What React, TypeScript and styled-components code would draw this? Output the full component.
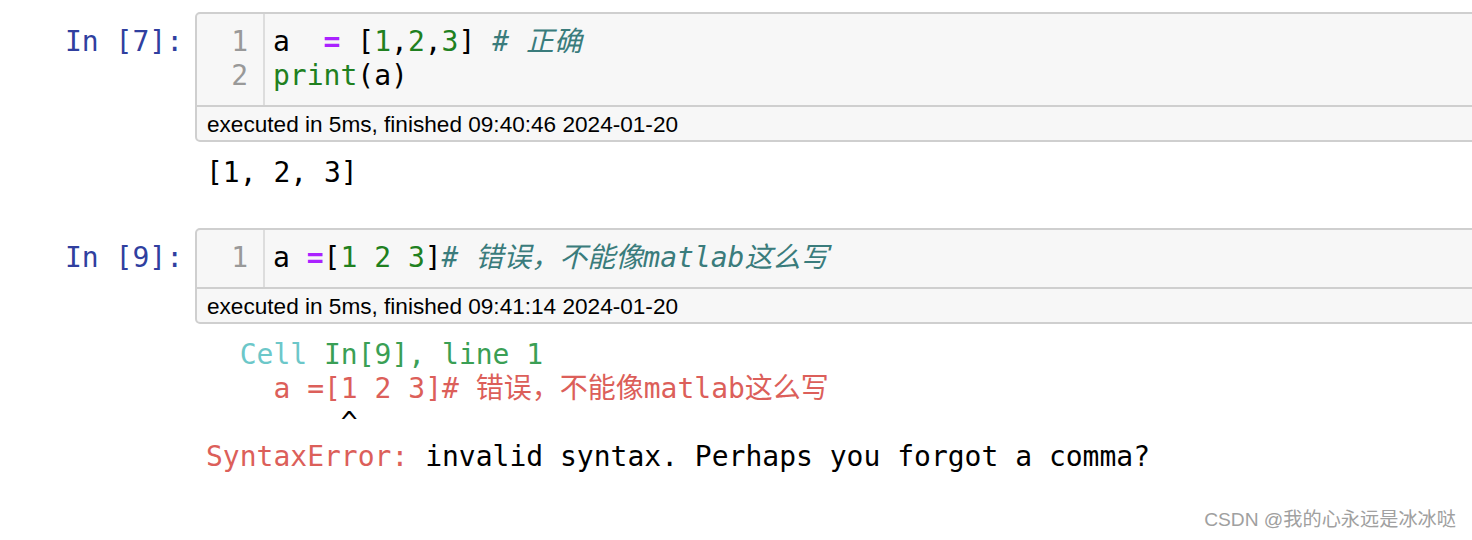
import React from "react";
import styled, { createGlobalStyle } from "styled-components";

const Global = createGlobalStyle`
  html, body { margin: 0; padding: 0; background: #fff; overflow: hidden; }
  body { width: 1472px; height: 540px; position: relative; }
`;

const MONO = `"DejaVu Sans Mono", "Noto Sans CJK SC", monospace`;

const Notebook = styled.div`
  width: 1510px;
  padding-top: 12px;
  display: flex;
  flex-direction: column;
  gap: 38px;
`;

const CellBlock = styled.div`
  display: flex;
  flex-direction: column;
`;

const InputRow = styled.div`
  display: flex;
  align-items: flex-start;
`;

const Prompt = styled.div`
  width: 195px;
  flex: none;
  box-sizing: border-box;
  padding-right: 12px;
  padding-top: 13px;
  text-align: right;
  font-family: ${MONO};
  font-size: 28px;
  line-height: 34px;
  color: #303f9f;
  white-space: pre;
`;

const InputBox = styled.div`
  flex: 1;
  border: 2px solid #cfcfcf;
  border-radius: 5px;
  background: #f7f7f7;
  display: flex;
  flex-direction: column;
`;

const CodeArea = styled.div`
  display: flex;
`;

const Gutter = styled.div`
  width: 68px;
  flex: none;
  box-sizing: border-box;
  border-right: 2px solid #dddddd;
  padding: 11px 15px 12px 0;
  text-align: right;
  font-family: ${MONO};
  font-size: 28px;
  line-height: 34px;
  color: #999999;
`;

const Code = styled.div`
  padding: 11px 0 12px 8px;
  font-family: ${MONO};
  font-size: 28px;
  line-height: 34px;
  color: #000;
  white-space: pre;
`;

const Footer = styled.div`
  border-top: 2px solid #cfcfcf;
  padding: 6px 10px 3px;
  font-family: "Liberation Sans", Arial, sans-serif;
  font-size: 22.6px;
  line-height: 24px;
  color: #000;
`;

const OutputRow = styled.div`
  display: flex;
  padding-top: 14px;
`;

const OutputSpacer = styled.div`
  width: 206px;
  flex: none;
`;

const OutputText = styled.div`
  font-family: ${MONO};
  font-size: 28px;
  line-height: 34px;
  color: #000;
  white-space: pre;
`;

type Kind = "op" | "num" | "kw" | "comment" | "cyan" | "green" | "red" | "plain";

const colors: Record<Kind, string> = {
  op: "#aa22ff",
  num: "#208020",
  kw: "#208020",
  comment: "#3a7c7c",
  cyan: "#6cc7c9",
  green: "#3a9f55",
  red: "#dc5f5a",
  plain: "#000",
};

const Tok = styled.span<{ $k: Kind }>`
  color: ${(p) => colors[p.$k]};
  font-weight: ${(p) => (p.$k === "op" ? 700 : 400)};
  font-style: ${(p) => (p.$k === "comment" ? "italic" : "normal")};
`;

const Watermark = styled.div`
  position: absolute;
  right: 16px;
  bottom: 8px;
  font-family: "Liberation Sans", "Noto Sans CJK SC", sans-serif;
  font-size: 19.2px;
  color: #a0a0a0;
`;

export default function App() {
  return (
    <>
      <Global />
      <Notebook>
        <CellBlock>
          <InputRow>
            <Prompt>In [7]:</Prompt>
            <InputBox>
              <CodeArea>
                <Gutter>
                  <div>1</div>
                  <div>2</div>
                </Gutter>
                <Code>
                  <div>
                    a  <Tok $k="op">=</Tok> [<Tok $k="num">1</Tok>,<Tok $k="num">2</Tok>,
                    <Tok $k="num">3</Tok>] <Tok $k="comment"># 正确</Tok>
                  </div>
                  <div>
                    <Tok $k="kw">print</Tok>(a)
                  </div>
                </Code>
              </CodeArea>
              <Footer>executed in 5ms, finished 09:40:46 2024-01-20</Footer>
            </InputBox>
          </InputRow>
          <OutputRow>
            <OutputSpacer />
            <OutputText>[1, 2, 3]</OutputText>
          </OutputRow>
        </CellBlock>
        <CellBlock>
          <InputRow>
            <Prompt>In [9]:</Prompt>
            <InputBox>
              <CodeArea>
                <Gutter>
                  <div>1</div>
                </Gutter>
                <Code>
                  <div>
                    a <Tok $k="op">=</Tok>[<Tok $k="num">1</Tok> <Tok $k="num">2</Tok>{" "}
                    <Tok $k="num">3</Tok>]<Tok $k="comment"># 错误，不能像matlab这么写</Tok>
                  </div>
                </Code>
              </CodeArea>
              <Footer>executed in 5ms, finished 09:41:14 2024-01-20</Footer>
            </InputBox>
          </InputRow>
          <OutputRow>
            <OutputSpacer />
            <OutputText>
              <div>
                {"  "}
                <Tok $k="cyan">Cell</Tok> <Tok $k="green">In[9], line 1</Tok>
              </div>
              <div>
                <Tok $k="red">{"    a =[1 2 3]# 错误，不能像matlab这么写"}</Tok>
              </div>
              <div>{"        ^"}</div>
              <div>
                <Tok $k="red">SyntaxError:</Tok> invalid syntax. Perhaps you forgot a comma?
              </div>
            </OutputText>
          </OutputRow>
        </CellBlock>
      </Notebook>
      <Watermark>CSDN @我的心永远是冰冰哒</Watermark>
    </>
  );
}
